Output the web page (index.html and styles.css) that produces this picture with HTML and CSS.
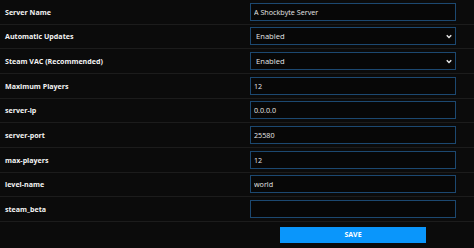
FILE: index.html
```html
<!DOCTYPE html>
<html lang="en">
<head>
    <meta charset="UTF-8">
    <meta name="viewport" content="width=device-width, initial-scale=1.0">
    <title>Server Settings</title>
    <link rel="stylesheet" href="styles.css">
</head>
<body>
    <form class="settings">
        <div class="row">
            <label class="label">Server Name</label>
            <div class="field"><input type="text" value="A Shockbyte Server"></div>
        </div>
        <div class="row">
            <label class="label">Automatic Updates</label>
            <div class="field">
                <select><option>Enabled</option><option>Disabled</option></select>
                <svg class="chevron" viewBox="0 0 8 6" width="6" height="5"><path d="M1 1.2 L4 4.2 L7 1.2" fill="none" stroke="#e8e8e8" stroke-width="1.9"/></svg>
            </div>
        </div>
        <div class="row">
            <label class="label">Steam VAC (Recommended)</label>
            <div class="field">
                <select><option>Enabled</option><option>Disabled</option></select>
                <svg class="chevron" viewBox="0 0 8 6" width="6" height="5"><path d="M1 1.2 L4 4.2 L7 1.2" fill="none" stroke="#e8e8e8" stroke-width="1.9"/></svg>
            </div>
        </div>
        <div class="row">
            <label class="label">Maximum Players</label>
            <div class="field"><input type="text" value="12"></div>
        </div>
        <div class="row">
            <label class="label">server-ip</label>
            <div class="field"><input type="text" value="0.0.0.0"></div>
        </div>
        <div class="row">
            <label class="label">server-port</label>
            <div class="field"><input type="text" value="25580"></div>
        </div>
        <div class="row">
            <label class="label">max-players</label>
            <div class="field"><input type="text" value="12"></div>
        </div>
        <div class="row">
            <label class="label">level-name</label>
            <div class="field"><input type="text" value="world"></div>
        </div>
        <div class="row">
            <label class="label">steam_beta</label>
            <div class="field"><input type="text" value=""></div>
        </div>
        <div class="actions">
            <button type="button" class="save">SAVE</button>
        </div>
    </form>
</body>
</html>
```

FILE: styles.css
```css
body {
    margin: 0;
    padding: 0;
    background-color: #0b0b0b;
    font-family: "Open Sans", "DejaVu Sans", sans-serif;
    color: #f2f2f2;
}

.settings {
    display: flex;
    flex-direction: column;
}

.row {
    display: grid;
    grid-template-columns: 1fr 206px;
    align-items: center;
    box-sizing: border-box;
    height: 24.67px;
    border-bottom: 1px solid #1c1c1c;
    padding: 0 18px 0 5px;
}

.label {
    font-size: 7.1px;
    font-weight: 700;
    line-height: 10px;
    color: #f4f4f4;
}

.field {
    position: relative;
    height: 18px;
}

.field input,
.field select {
    display: block;
    box-sizing: border-box;
    width: 100%;
    height: 18px;
    margin: 0;
    padding: 0 3px;
    background-color: #070707;
    border: 1px solid #1c4870;
    border-radius: 0;
    color: #e6e6e6;
    font-family: inherit;
    font-size: 7.2px;
    outline: none;
}

.field select {
    appearance: none;
    -webkit-appearance: none;
    padding-left: 5px;
    font-size: 7.6px;
}

.chevron {
    position: absolute;
    right: 4px;
    top: 7px;
    pointer-events: none;
}

.actions {
    display: grid;
    grid-template-columns: 1fr 206px;
    padding: 5px 18px 0 5px;
}

.save {
    grid-column: 2;
    justify-self: center;
    width: 146px;
    height: 16px;
    margin: 0;
    padding: 0;
    border: none;
    background-color: #0a96fb;
    color: #ffffff;
    font-family: inherit;
    font-size: 7px;
    font-weight: 700;
}
```
